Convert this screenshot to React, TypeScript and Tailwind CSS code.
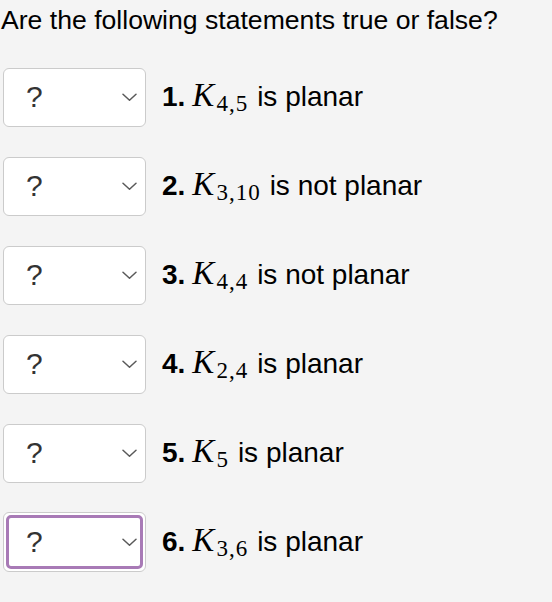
import React from "react";

const Chevron = () => (
  <svg width="15" height="9" viewBox="0 0 15 9" fill="none" className="block">
    <path d="M1 1.3 L7.5 7.3 L14 1.3" stroke="#5a5a5a" strokeWidth="1.5" strokeLinecap="round" strokeLinejoin="round" />
  </svg>
);

type Item = { n: number; a: string; rest: string };

const items: Item[] = [
  { n: 1, a: "4,5", rest: "is planar" },
  { n: 2, a: "3,10", rest: "is not planar" },
  { n: 3, a: "4,4", rest: "is not planar" },
  { n: 4, a: "2,4", rest: "is planar" },
  { n: 5, a: "5", rest: "is planar" },
  { n: 6, a: "3,6", rest: "is planar" },
];

function SelectBox({ focused }: { focused: boolean }) {
  if (focused) {
    return (
      <div className="w-[143px] h-[60px] rounded-[6px] border border-[#cbcbcb] bg-white p-[2px] shrink-0">
        <div className="w-full h-full rounded-[5px] border-[3px] border-[#a87ab6] flex items-center pl-[17px] pr-[3px]">
          <span className="text-[30px] text-[#333] leading-none flex-1">?</span>
          <Chevron />
        </div>
      </div>
    );
  }
  return (
    <div className="w-[143px] h-[59px] rounded-[6px] border border-[#cbcbcb] bg-white flex items-center pl-[22px] pr-[8px] shrink-0">
      <span className="text-[30px] text-[#333] leading-none flex-1">?</span>
      <Chevron />
    </div>
  );
}

export default function App() {
  return (
    <div
      className="w-[552px] h-[602px] bg-[#f4f4f4] text-black overflow-hidden"
      style={{ fontFamily: '"Liberation Sans", Arial, sans-serif' }}
    >
      <div className="pt-[5px] pl-[1px] text-[26.6px] leading-[30px]">Are the following statements true or false?</div>
      <div className="flex flex-col gap-[29px] mt-[32px] pl-[3px]">
        {items.map((it, i) => (
          <div key={it.n} className="flex items-center h-[60px]">
            <SelectBox focused={i === 5} />
            <div className="ml-[16px] text-[28px] leading-none flex items-baseline relative -top-[2px]">
              <span className="font-bold">{it.n}.</span>
              <span className="ml-[7px]" style={{ fontFamily: '"Liberation Serif", "Times New Roman", serif' }}>
                <span className="italic text-[33px]">K</span>
                <span className="text-[23px] relative top-[5px] ml-[2px] tracking-[1px]">{it.a}</span>
              </span>
              <span className="ml-[9px]">{it.rest}</span>
            </div>
          </div>
        ))}
      </div>
    </div>
  );
}
